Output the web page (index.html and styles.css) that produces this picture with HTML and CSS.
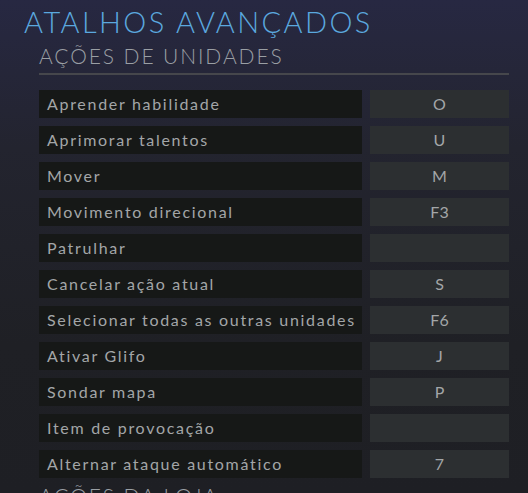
FILE: index.html
```html
<!DOCTYPE html>
<html lang="pt-BR">
<head>
    <meta charset="UTF-8">
    <title>Atalhos avançados</title>
    <link rel="stylesheet" href="styles.css">
</head>
<body>
    <div class="panel">
        <h1 class="title">ATALHOS AVANÇADOS</h1>

        <div class="group">
            <h2 class="group-title">AÇÕES DE UNIDADES</h2>
            <div class="binds">
                <div class="bind"><span class="bind-name">Aprender habilidade</span><span class="bind-key">O</span></div>
                <div class="bind"><span class="bind-name">Aprimorar talentos</span><span class="bind-key">U</span></div>
                <div class="bind"><span class="bind-name">Mover</span><span class="bind-key">M</span></div>
                <div class="bind"><span class="bind-name">Movimento direcional</span><span class="bind-key">F3</span></div>
                <div class="bind"><span class="bind-name">Patrulhar</span><span class="bind-key"></span></div>
                <div class="bind"><span class="bind-name">Cancelar ação atual</span><span class="bind-key">S</span></div>
                <div class="bind"><span class="bind-name">Selecionar todas as outras unidades</span><span class="bind-key">F6</span></div>
                <div class="bind"><span class="bind-name">Ativar Glifo</span><span class="bind-key">J</span></div>
                <div class="bind"><span class="bind-name">Sondar mapa</span><span class="bind-key">P</span></div>
                <div class="bind"><span class="bind-name">Item de provocação</span><span class="bind-key"></span></div>
                <div class="bind"><span class="bind-name">Alternar ataque automático</span><span class="bind-key">7</span></div>
            </div>
        </div>

        <div class="group">
            <h2 class="group-title">AÇÕES DA LOJA</h2>
        </div>
    </div>
</body>
</html>
```

FILE: styles.css
```css
* {
    margin: 0;
    padding: 0;
    box-sizing: border-box;
}

html, body {
    height: 100%;
}

body {
    font-family: Lato, "Open Sans", sans-serif;
    background: linear-gradient(180deg, #272842 0%, #23242f 30%, #1f2025 70%, #1e1f24 100%);
    overflow: hidden;
}

.panel {
    padding: 5px 0 0 24px;
}

.title {
    font-size: 29px;
    font-weight: 300;
    letter-spacing: 2.4px;
    color: #5ba8df;
    line-height: 34px;
}

.group {
    padding-left: 15px;
    width: 485px;
}

.group-title {
    font-size: 21px;
    font-weight: 300;
    letter-spacing: 1.9px;
    color: #9a9fa4;
    line-height: 26px;
    margin-top: 4px;
    padding-bottom: 4px;
    border-bottom: 2px solid #46474c;
}

.binds {
    padding-top: 15px;
    display: flex;
    flex-direction: column;
    gap: 8px;
}

.bind {
    display: grid;
    grid-template-columns: 323px 139px;
    gap: 8px;
    height: 28px;
}

.bind-name {
    background: #161817;
    color: #a3a6a8;
    font-size: 16px;
    letter-spacing: 1.7px;
    line-height: 27px;
    padding-left: 8px;
    white-space: nowrap;
}

.bind-key {
    background: #2c2f31;
    color: #a3a6a8;
    font-size: 16px;
    text-align: center;
    line-height: 27px;
}

.group + .group .group-title {
    border-bottom: none;
    margin-top: 5px;
}
```
